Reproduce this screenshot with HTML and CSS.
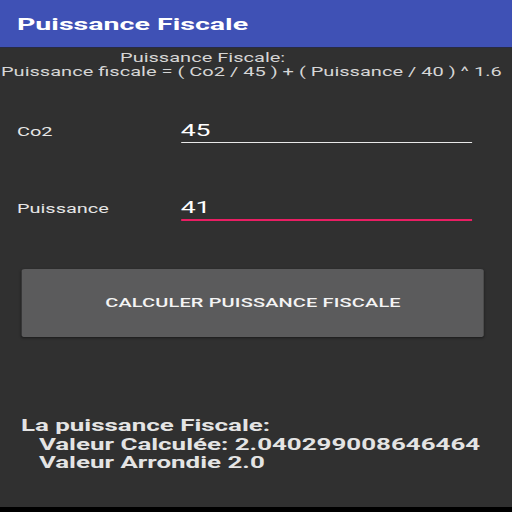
FILE: index.html
```html
<!DOCTYPE html>
<html lang="fr">
<head>
<meta charset="utf-8">
<title>Puissance Fiscale</title>
<link rel="stylesheet" href="styles.css">
</head>
<body>
<div class="screen">
  <header class="appbar">
    <h1 class="appbar-title">Puissance Fiscale</h1>
  </header>
  <div class="formula">
    <div class="formula-head">Puissance Fiscale:</div>
    <div class="formula-body">Puissance fiscale = ( Co2 / 45 ) + ( Puissance / 40 ) ^ 1.6</div>
  </div>
  <div class="field-row field-row-first">
    <span class="field-label">Co2</span>
    <span class="field-input">45</span>
  </div>
  <div class="field-row field-row-second">
    <span class="field-label">Puissance</span>
    <span class="field-input field-input-focused">41</span>
  </div>
  <button class="calc-button" type="button">CALCULER PUISSANCE FISCALE</button>
  <div class="result">
    <div class="result-title">La puissance Fiscale:</div>
    <div class="result-line">Valeur Calculée: 2.040299008646464</div>
    <div class="result-line">Valeur Arrondie 2.0</div>
  </div>
  <div class="navbar"></div>
</div>
</body>
</html>
```
FILE: styles.css
```css
html, body {
  margin: 0;
  padding: 0;
  background: #303030;
  overflow: hidden;
}

.screen {
  width: 308px;
  height: 512px;
  display: flex;
  flex-direction: column;
  font-family: Roboto, "Liberation Sans", sans-serif;
  transform: scaleX(1.6623);
  transform-origin: 0 0;
  background: #303030;
}

.appbar {
  flex: none;
  height: 48px;
  background: #3f51b5;
  border-bottom: 1px solid #272b45;
  display: flex;
  align-items: center;
  padding: 1px 0 0 10.2px;
  box-sizing: border-box;
}

.appbar-title {
  margin: 0;
  font-size: 17.2px;
  font-weight: 700;
  color: #ffffff;
  line-height: 20px;
}

.formula {
  margin-top: 2.6px;
  font-size: 12.05px;
  line-height: 14px;
  color: #d6d6d6;
  white-space: nowrap;
}

.formula-head {
  padding-left: 72.2px;
}

.formula-body {
  padding-left: 0.6px;
}

.field-row {
  display: flex;
  align-items: baseline;
  padding-left: 10.2px;
}

.field-row-first {
  margin-top: 42.4px;
}

.field-row-second {
  margin-top: 55px;
}

.field-label {
  width: 98.5px;
  font-size: 12px;
  color: #e6e6e6;
}

.field-input {
  width: 175.4px;
  font-size: 16px;
  line-height: 19px;
  color: #ffffff;
  padding-bottom: 2px;
  border-bottom: 1px solid #e8e8e8;
}

.field-input-focused {
  border-bottom: 2px solid #e91e63;
}

.calc-button {
  margin: 48.3px 0 0 13.2px;
  width: 278px;
  height: 68px;
  flex: none;
  background: #5b5b5c;
  border: none;
  border-radius: 2px;
  box-shadow: 0 1px 2px rgba(0, 0, 0, 0.45);
  color: #f4f4f4;
  font-family: Roboto, "Liberation Sans", sans-serif;
  font-size: 12px;
  font-weight: 500;
  letter-spacing: 0.1px;
  padding: 0;
}

.result {
  margin-top: 80px;
  padding-left: 12.6px;
  font-size: 15.6px;
  line-height: 18.3px;
  font-weight: 700;
  color: #e4e4e4;
  white-space: nowrap;
}

.result-line {
  padding-left: 10.8px;
}

.navbar {
  margin-top: auto;
  height: 5px;
  flex: none;
  background: #000000;
}
```
